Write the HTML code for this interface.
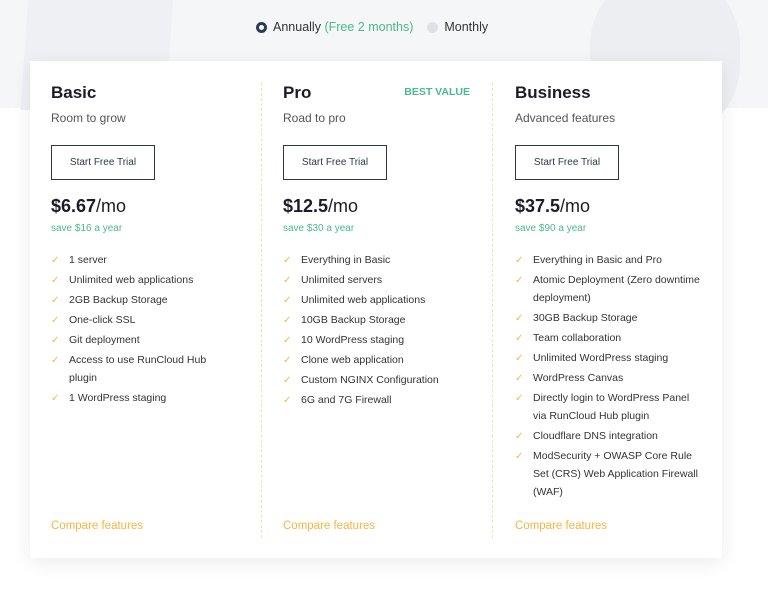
<!DOCTYPE html>
<html><head><style>
*{margin:0;padding:0;box-sizing:border-box}
body{width:768px;height:592px;background:#fff;font-family:"Liberation Sans",sans-serif;color:#2d2d3a;position:relative;overflow:hidden}
.top{position:absolute;left:0;top:0;width:768px;height:108px;background:#f5f6f8}
.shape1{position:absolute;left:25px;top:-20px;width:145px;height:130px;background:#eef0f3;transform:skew(-4deg)}
.circ{position:absolute;left:590px;top:-30px;width:150px;height:170px;border-radius:75px;background:#eceef1}
.toggle{position:absolute;top:20px;left:256px;font-size:12.5px;color:#333;display:flex;align-items:center;white-space:nowrap}
.r{width:11px;height:11px;border-radius:50%;display:inline-block;margin-right:6px}
.card{position:absolute;left:30px;top:61px;width:692px;height:497px;background:#fff;box-shadow:0 4px 18px rgba(0,0,0,.08)}
.col{position:absolute;top:0;height:497px;width:200px}
.col *{white-space:nowrap}
.div{position:absolute;top:22px;height:455px;border-left:1px dashed #f6dfb0}
h2{position:absolute;top:22px;font-size:17px;font-weight:bold;color:#1c1c28}
.sub{position:absolute;top:50px;font-size:12px;color:#555}
.btn{position:absolute;top:84px;width:104px;height:35px;border:1px solid #2d3748;font-size:10px;line-height:33px;text-align:center;color:#2d3748}
.price{position:absolute;top:135px;font-size:18px;color:#1c1c28}
.price b{font-weight:bold}
.save{position:absolute;top:162px;font-size:10px;color:#4cb98a}
.col ul{position:absolute;top:190px;list-style:none;font-size:10.5px;color:#333;width:180px;white-space:normal}
.col ul li{white-space:normal;position:relative;padding-left:18px;line-height:18px;margin-bottom:2px}
li:before{content:"✓";position:absolute;left:0;top:1px;color:#f6b545;font-size:10px}
.cmp{position:absolute;top:459px;font-size:11.5px;color:#f6b545}
</style></head><body>
<div class="top"><div class="shape1"></div><div class="circ"></div></div>
<div class="toggle"><span class="r" style="background:#fff;border:3px solid #2d3b55"></span>Annually&nbsp;<span style="color:#4cb98a">(Free 2 months)</span><span class="r" style="background:#dfe1e5;margin-left:14px"></span>Monthly</div>
<div class="card">
<div class="div" style="left:231px"></div><div class="div" style="left:462px"></div>
<div class="col" style="left:21px">
<h2>Basic</h2><div class="sub">Room to grow</div><div class="btn">Start Free Trial</div>
<div class="price"><b>$6.67</b>/mo</div><div class="save">save $16 a year</div>
<ul style="width:160px"><li>1 server</li><li>Unlimited web applications</li><li>2GB Backup Storage</li><li>One-click SSL</li><li>Git deployment</li><li>Access to use RunCloud Hub plugin</li><li>1 WordPress staging</li></ul>
<div class="cmp">Compare features</div></div>
<div class="col" style="left:253px;width:187px">
<h2>Pro</h2><div style="position:absolute;right:0;top:25px;font-size:10.5px;font-weight:bold;color:#4cb98a">BEST VALUE</div>
<div class="sub">Road to pro</div><div class="btn">Start Free Trial</div>
<div class="price"><b>$12.5</b>/mo</div><div class="save">save $30 a year</div>
<ul><li>Everything in Basic</li><li>Unlimited servers</li><li>Unlimited web applications</li><li>10GB Backup Storage</li><li>10 WordPress staging</li><li>Clone web application</li><li>Custom NGINX Configuration</li><li>6G and 7G Firewall</li></ul>
<div class="cmp">Compare features</div></div>
<div class="col" style="left:485px">
<h2>Business</h2><div class="sub">Advanced features</div><div class="btn">Start Free Trial</div>
<div class="price"><b>$37.5</b>/mo</div><div class="save">save $90 a year</div>
<ul style="width:188px"><li>Everything in Basic and Pro</li><li>Atomic Deployment (Zero downtime deployment)</li><li>30GB Backup Storage</li><li>Team collaboration</li><li>Unlimited WordPress staging</li><li>WordPress Canvas</li><li>Directly login to WordPress Panel via RunCloud Hub plugin</li><li>Cloudflare DNS integration</li><li>ModSecurity + OWASP Core Rule Set (CRS) Web Application Firewall (WAF)</li></ul>
<div class="cmp">Compare features</div></div>
</div>
</body></html>
